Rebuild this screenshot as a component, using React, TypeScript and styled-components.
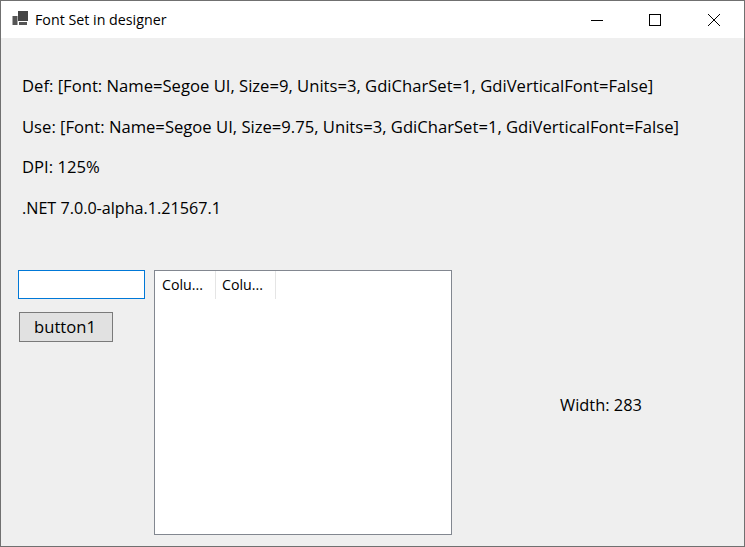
import React from "react";
import styled, { createGlobalStyle } from "styled-components";

const GlobalStyle = createGlobalStyle`
  html, body {
    margin: 0;
    padding: 0;
    background: #f0f0f0;
  }
`;

const FormWindow = styled.div`
  box-sizing: border-box;
  width: 745px;
  height: 547px;
  border: 1px solid #707070;
  background: #efefef;
  font-family: "Open Sans", "Noto Sans", "Liberation Sans", sans-serif;
  color: #000;
  display: flex;
  flex-direction: column;
  overflow: hidden;
`;

const TitleBar = styled.div`
  height: 37px;
  flex: none;
  background: #fff;
  display: flex;
  align-items: center;
  padding: 0 1px 0 11px;
`;

const AppIcon = styled.svg`
  width: 16px;
  height: 17px;
  flex: none;
`;

const Title = styled.span`
  margin-left: 7px;
  font-size: 14.25px;
  line-height: 37px;
  flex: 1;
`;

const CaptionButton = styled.div`
  width: 58.5px;
  height: 37px;
  display: flex;
  align-items: center;
  justify-content: center;
  flex: none;
`;

const Body = styled.div`
  flex: 1;
  display: flex;
  flex-direction: column;
  padding: 38px 0 0 17px;
`;

const InfoList = styled.div`
  display: flex;
  flex-direction: column;
  gap: 20px;
  padding-left: 4px;
`;

const InfoLine = styled.div<{ $size?: number }>`
  font-size: ${(p) => p.$size ?? 16.64}px;
  line-height: 20.5px;
  white-space: nowrap;
`;

const Controls = styled.div`
  display: flex;
  align-items: flex-start;
  margin-top: 52px;
`;

const LeftColumn = styled.div`
  width: 136px;
  flex: none;
  display: flex;
  flex-direction: column;
`;

const TextInput = styled.input`
  box-sizing: border-box;
  width: 127px;
  height: 29px;
  border: 1px solid #0078d7;
  background: #fff;
  outline: none;
  padding: 0 3px;
`;

const PushButton = styled.button`
  box-sizing: border-box;
  width: 94px;
  height: 30px;
  margin: 13px 0 0 1px;
  border: 1px solid #7a7a7a;
  background: #e1e1e1;
  font-family: inherit;
  font-size: 16.6px;
  color: #000;
  padding: 0 2px 2px 0;
`;

const ListView = styled.div`
  box-sizing: border-box;
  width: 298px;
  height: 265px;
  flex: none;
  border: 1px solid #828790;
  background: #fff;
  display: flex;
  align-items: flex-start;
`;

const ColumnHeader = styled.div<{ $first?: boolean }>`
  box-sizing: border-box;
  width: ${(p) => (p.$first ? 61 : 60)}px;
  height: 28px;
  border-right: 1px solid #e5e5e5;
  padding-left: ${(p) => (p.$first ? 7 : 6)}px;
  font-size: 14.2px;
  line-height: 28px;
  white-space: nowrap;
`;

const WidthLabel = styled.div`
  margin: 125px 0 0 108px;
  font-size: 16.4px;
  line-height: 20px;
  white-space: nowrap;
`;

export default function App() {
  return (
    <>
      <GlobalStyle />
      <FormWindow>
        <TitleBar>
          <AppIcon viewBox="0 0 16 17">
            <rect x="0.5" y="5" width="5" height="9" fill="#555" />
            <rect x="6" y="0" width="10" height="10" fill="#444" />
            <rect x="7" y="11" width="8" height="3" fill="#555" />
          </AppIcon>
          <Title>Font Set in designer</Title>
          <CaptionButton>
            <svg width="12" height="12" viewBox="0 0 12 12">
              <path d="M0 6.5H12" stroke="#000" strokeWidth="1" fill="none" />
            </svg>
          </CaptionButton>
          <CaptionButton>
            <svg width="12" height="12" viewBox="0 0 12 12">
              <rect x="0.5" y="0.5" width="11" height="11" stroke="#000" strokeWidth="1" fill="none" />
            </svg>
          </CaptionButton>
          <CaptionButton>
            <svg width="12" height="12" viewBox="0 0 12 12">
              <path d="M0 0L12 12M12 0L0 12" stroke="#000" strokeWidth="1" fill="none" />
            </svg>
          </CaptionButton>
        </TitleBar>
        <Body>
          <InfoList>
            <InfoLine>Def: [Font: Name=Segoe UI, Size=9, Units=3, GdiCharSet=1, GdiVerticalFont=False]</InfoLine>
            <InfoLine>Use: [Font: Name=Segoe UI, Size=9.75, Units=3, GdiCharSet=1, GdiVerticalFont=False]</InfoLine>
            <InfoLine>DPI: 125%</InfoLine>
            <InfoLine $size={16.15}>.NET 7.0.0-alpha.1.21567.1</InfoLine>
          </InfoList>
          <Controls>
            <LeftColumn>
              <TextInput />
              <PushButton>button1</PushButton>
            </LeftColumn>
            <ListView>
              <ColumnHeader $first>Colu...</ColumnHeader>
              <ColumnHeader>Colu...</ColumnHeader>
            </ListView>
            <WidthLabel>Width: 283</WidthLabel>
          </Controls>
        </Body>
      </FormWindow>
    </>
  );
}
